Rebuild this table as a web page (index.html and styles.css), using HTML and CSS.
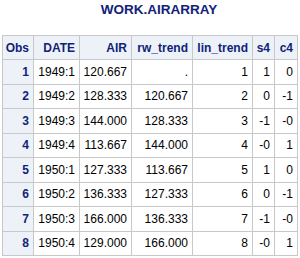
FILE: index.html
```html
<!DOCTYPE html>
<html>
<head>
<meta charset="utf-8">
<link rel="stylesheet" href="styles.css">
</head>
<body>
<div class="page">
  <h1 class="title">WORK.AIRARRAY</h1>
  <table class="data">
    <colgroup>
      <col class="c-obs"><col class="c-date"><col class="c-air"><col class="c-rw"><col class="c-lin"><col class="c-s4"><col class="c-c4">
    </colgroup>
    <thead>
      <tr><th>Obs</th><th>DATE</th><th>AIR</th><th>rw_trend</th><th>lin_trend</th><th>s4</th><th>c4</th></tr>
    </thead>
    <tbody>
      <tr><th>1</th><td>1949:1</td><td>120.667</td><td>.</td><td>1</td><td>1</td><td>0</td></tr>
      <tr><th>2</th><td>1949:2</td><td>128.333</td><td>120.667</td><td>2</td><td>0</td><td>-1</td></tr>
      <tr><th>3</th><td>1949:3</td><td>144.000</td><td>128.333</td><td>3</td><td>-1</td><td>-0</td></tr>
      <tr><th>4</th><td>1949:4</td><td>113.667</td><td>144.000</td><td>4</td><td>-0</td><td>1</td></tr>
      <tr><th>5</th><td>1950:1</td><td>127.333</td><td>113.667</td><td>5</td><td>1</td><td>0</td></tr>
      <tr><th>6</th><td>1950:2</td><td>136.333</td><td>127.333</td><td>6</td><td>0</td><td>-1</td></tr>
      <tr><th>7</th><td>1950:3</td><td>166.000</td><td>136.333</td><td>7</td><td>-1</td><td>-0</td></tr>
      <tr><th>8</th><td>1950:4</td><td>129.000</td><td>166.000</td><td>8</td><td>-0</td><td>1</td></tr>
    </tbody>
  </table>
</div>
</body>
</html>
```
FILE: styles.css
```css
html, body {
  margin: 0;
  padding: 0;
  background: #ffffff;
}
.page {
  padding: 1px 0 0 2px;
  font-family: "Liberation Sans", Arial, sans-serif;
}
.title {
  box-sizing: border-box;
  margin: 0;
  height: 34px;
  padding-left: 18px;
  text-align: center;
  font-size: 13.5px;
  line-height: 18px;
  font-weight: bold;
  color: #112277;
  width: 296px;
}
.data {
  border-collapse: collapse;
  table-layout: fixed;
  width: 296px;
  font-size: 12px;
}
.c-obs { width: 31px; }
.c-date { width: 46px; }
.c-air { width: 52px; }
.c-rw { width: 61px; }
.c-lin { width: 60px; }
.c-s4 { width: 22px; }
.c-c4 { width: 23px; }
.data th, .data td {
  border: 1px solid #c8c8c8;
  padding: 0 4px 0 0;
  text-align: right;
  white-space: nowrap;
  overflow: hidden;
}
.data thead th {
  height: 23px;
  background: #edf2f9;
  color: #112277;
  font-weight: bold;
}
.data tbody th {
  background: #edf2f9;
  color: #112277;
  font-weight: bold;
}
.data tbody td {
  color: #000000;
}
.data tbody tr {
  height: 24.5px;
}
```
